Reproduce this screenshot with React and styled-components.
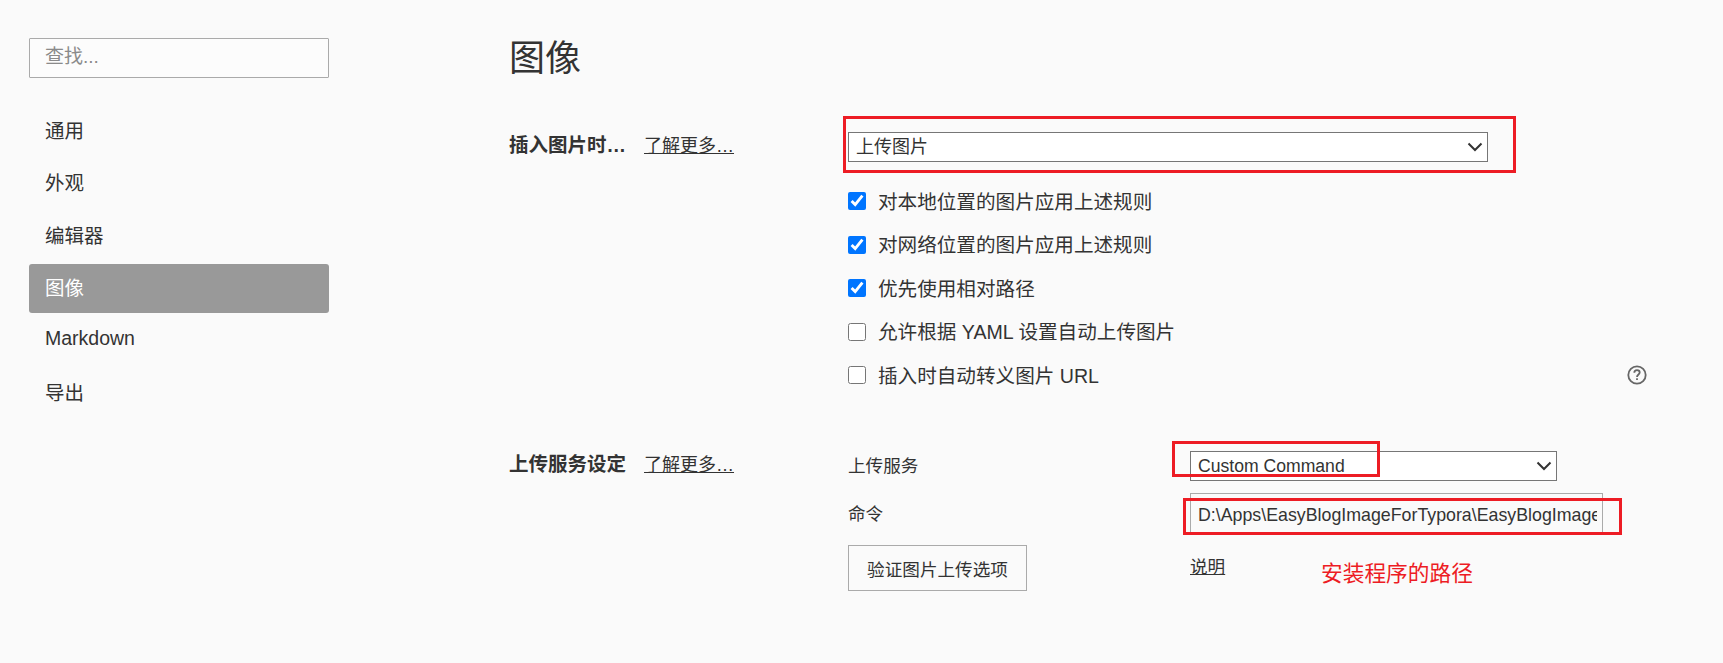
import React from "react";
import styled, { createGlobalStyle } from "styled-components";

const FONT = `"Liberation Sans", "Noto Sans CJK SC", sans-serif`;

const Global = createGlobalStyle`
  html, body { margin: 0; padding: 0; background: #fafafa; }
  body { font-family: ${FONT}; color: #333; }
  * { box-sizing: border-box; }
`;

const Page = styled.div`
  position: relative;
  width: 1723px;
  height: 663px;
  display: flex;
  overflow: hidden;
  background: #fafafa;
`;
const Sidebar = styled.aside`
  margin-left: 29px;
  padding-top: 38px;
  flex: none;
  width: 300px;
`;
const Search = styled.input`
  display: block;
  width: 300px;
  height: 40px;
  padding: 0 15px 3px;
  border: 1px solid #aaa;
  border-radius: 1px;
  background: #fcfcfc;
  font: 19px ${FONT};
  color: #333;
  outline: none;
  &::placeholder { color: #8a8a8a; opacity: 1; }
`;
const Nav = styled.nav`
  margin-top: 28.7px;
  display: flex;
  flex-direction: column;
  gap: 3.3px;
`;
const NavItem = styled.div`
  height: 49px;
  padding: 0 0 3px 16px;
  display: flex;
  align-items: center;
  border-radius: 3px;
  font-size: 19.5px;
  color: ${(p) => (p.$active ? "#fff" : "#333")};
  background: ${(p) => (p.$active ? "#999" : "transparent")};
`;
const Main = styled.main`
  margin-left: 180px;
  flex: 1;
  padding-top: 35px;
`;
const Title = styled.h1`
  margin: 0;
  height: 48px;
  line-height: 48px;
  font-size: 36px;
  font-weight: 400;
  color: #333;
`;
const Section = styled.section`
  display: grid;
  grid-template-columns: 339px 799px;
  margin-top: ${(p) => p.$top}px;
`;
const SectionHead = styled.div`
  display: flex;
  align-items: baseline;
  gap: 18px;
  line-height: 26px;
`;
const SectionLabel = styled.span`
  font-size: 19.5px;
  font-weight: 700;
  color: #333;
`;
const Link = styled.a`
  font-size: 18px;
  color: #333;
  text-decoration: underline;
  cursor: pointer;
`;
const ExplainLink = styled(Link)`
  margin-bottom: 6px;
  font-size: 17.6px;
`;
const SelectWrap = styled.div`
  position: relative;
  width: ${(p) => p.$w}px;
  height: 30px;
  svg { position: absolute; right: 4px; top: 6px; pointer-events: none; }
`;
const Select = styled.select`
  appearance: none;
  display: block;
  width: 100%;
  height: 30px;
  padding: 0 7px;
  border: 1px solid #767676;
  border-radius: 0;
  background: #fff;
  font: 18px ${FONT};
  color: #333;
`;
const LatinSelect = styled(Select)`
  font-size: 17.6px;
  padding-bottom: 1px;
`;
const Checks = styled.div`
  margin-top: 17.5px;
  display: flex;
  flex-direction: column;
`;
const CheckRow = styled.label`
  height: 43.5px;
  display: flex;
  align-items: center;
  font-size: 19.6px;
  color: #333;
`;
const CheckText = styled.span`
  padding-bottom: 2px;
`;
const Check = styled.input`
  width: 18px;
  height: 18px;
  margin: 0 12px 0 0;
  accent-color: #0075ff;
`;
const Help = styled.span`
  margin-left: auto;
  display: flex;
`;
const Settings = styled.div`
  display: grid;
  grid-template-columns: 342px 1fr;
  align-items: center;
  row-gap: 11px;
`;
const FieldLabel = styled.span`
  padding-bottom: 4px;
  font-size: 17.6px;
  color: #333;
`;
const CommandLabel = styled(FieldLabel)`
  padding-bottom: 2px;
`;
const CommandInput = styled.input`
  display: block;
  width: 413px;
  height: 41px;
  margin-top: 1px;
  padding: 2px 5px 0 7px;
  border: 1px solid #aaa;
  border-bottom: 0;
  background: #fafafa;
  font: 17.8px ${FONT};
  color: #333;
  outline: none;
`;
const Btn = styled.button`
  width: 179px;
  height: 46px;
  padding: 0;
  border: 1px solid #aaa;
  background: #fafafa;
  font: 17.6px ${FONT};
  color: #333;
`;
const Mark = styled.div`
  position: absolute;
  left: ${(p) => p.$x}px;
  top: ${(p) => p.$y}px;
  width: ${(p) => p.$w}px;
  height: ${(p) => p.$h}px;
  border: 3px solid #ed1c24;
  pointer-events: none;
`;
const Note = styled.div`
  position: absolute;
  left: 1321px;
  top: 559px;
  font-size: 21.7px;
  line-height: 30px;
  color: #ed1c24;
`;

const Chevron = () => (
  <svg width="18" height="18" viewBox="0 0 18 18" fill="none" stroke="#333" strokeWidth="2">
    <path d="M2.5 5.5 L9 12 L15.5 5.5" />
  </svg>
);
const HelpIcon = () => (
  <svg width="20" height="20" viewBox="0 0 20 20" fill="none" stroke="#666" strokeWidth="1.8">
    <circle cx="10" cy="10" r="8.7" />
    <path d="M7.3 7.8 C7.3 6.2 8.6 5.2 10 5.2 C11.5 5.2 12.7 6.2 12.7 7.6 C12.7 9.4 10 9.6 10 11.9" />
    <path d="M10 13.2 V15" />
  </svg>
);

const nav = ["通用", "外观", "编辑器", "图像", "Markdown", "导出"];
const checks = [
  ["对本地位置的图片应用上述规则", true],
  ["对网络位置的图片应用上述规则", true],
  ["优先使用相对路径", true],
  ["允许根据 YAML 设置自动上传图片", false],
  ["插入时自动转义图片 URL", false],
];

export default function App() {
  return (
    <Page>
      <Global />
      <Sidebar>
        <Search placeholder="查找..." />
        <Nav>
          {nav.map((n) => (
            <NavItem key={n} $active={n === "图像"}>{n}</NavItem>
          ))}
        </Nav>
      </Sidebar>
      <Main>
        <Title>图像</Title>
        <Section $top={49}>
          <SectionHead>
            <SectionLabel>插入图片时…</SectionLabel>
            <Link>了解更多…</Link>
          </SectionHead>
          <div>
            <SelectWrap $w={640}>
              <Select defaultValue="a"><option value="a">上传图片</option></Select>
              <Chevron />
            </SelectWrap>
            <Checks>
              {checks.map(([t, c], i) => (
                <CheckRow key={t}>
                  <Check type="checkbox" defaultChecked={c} />
                  <CheckText>{t}</CheckText>
                  {i === 4 && <Help><HelpIcon /></Help>}
                </CheckRow>
              ))}
            </Checks>
          </div>
        </Section>
        <Section $top={54}>
          <SectionHead>
            <SectionLabel>上传服务设定</SectionLabel>
            <Link>了解更多…</Link>
          </SectionHead>
          <Settings>
            <FieldLabel>上传服务</FieldLabel>
            <SelectWrap $w={367}>
              <LatinSelect defaultValue="c"><option value="c">Custom Command</option></LatinSelect>
              <Chevron />
            </SelectWrap>
            <CommandLabel>命令</CommandLabel>
            <CommandInput defaultValue="D:\Apps\EasyBlogImageForTypora\EasyBlogImageForTypora.exe" />
            <Btn>验证图片上传选项</Btn>
            <ExplainLink>说明</ExplainLink>
          </Settings>
        </Section>
      </Main>
      <Mark $x={843} $y={116} $w={673} $h={57} />
      <Mark $x={1172} $y={441} $w={208} $h={36} />
      <Mark $x={1183} $y={498} $w={439} $h={37} />
      <Note>安装程序的路径</Note>
    </Page>
  );
}
